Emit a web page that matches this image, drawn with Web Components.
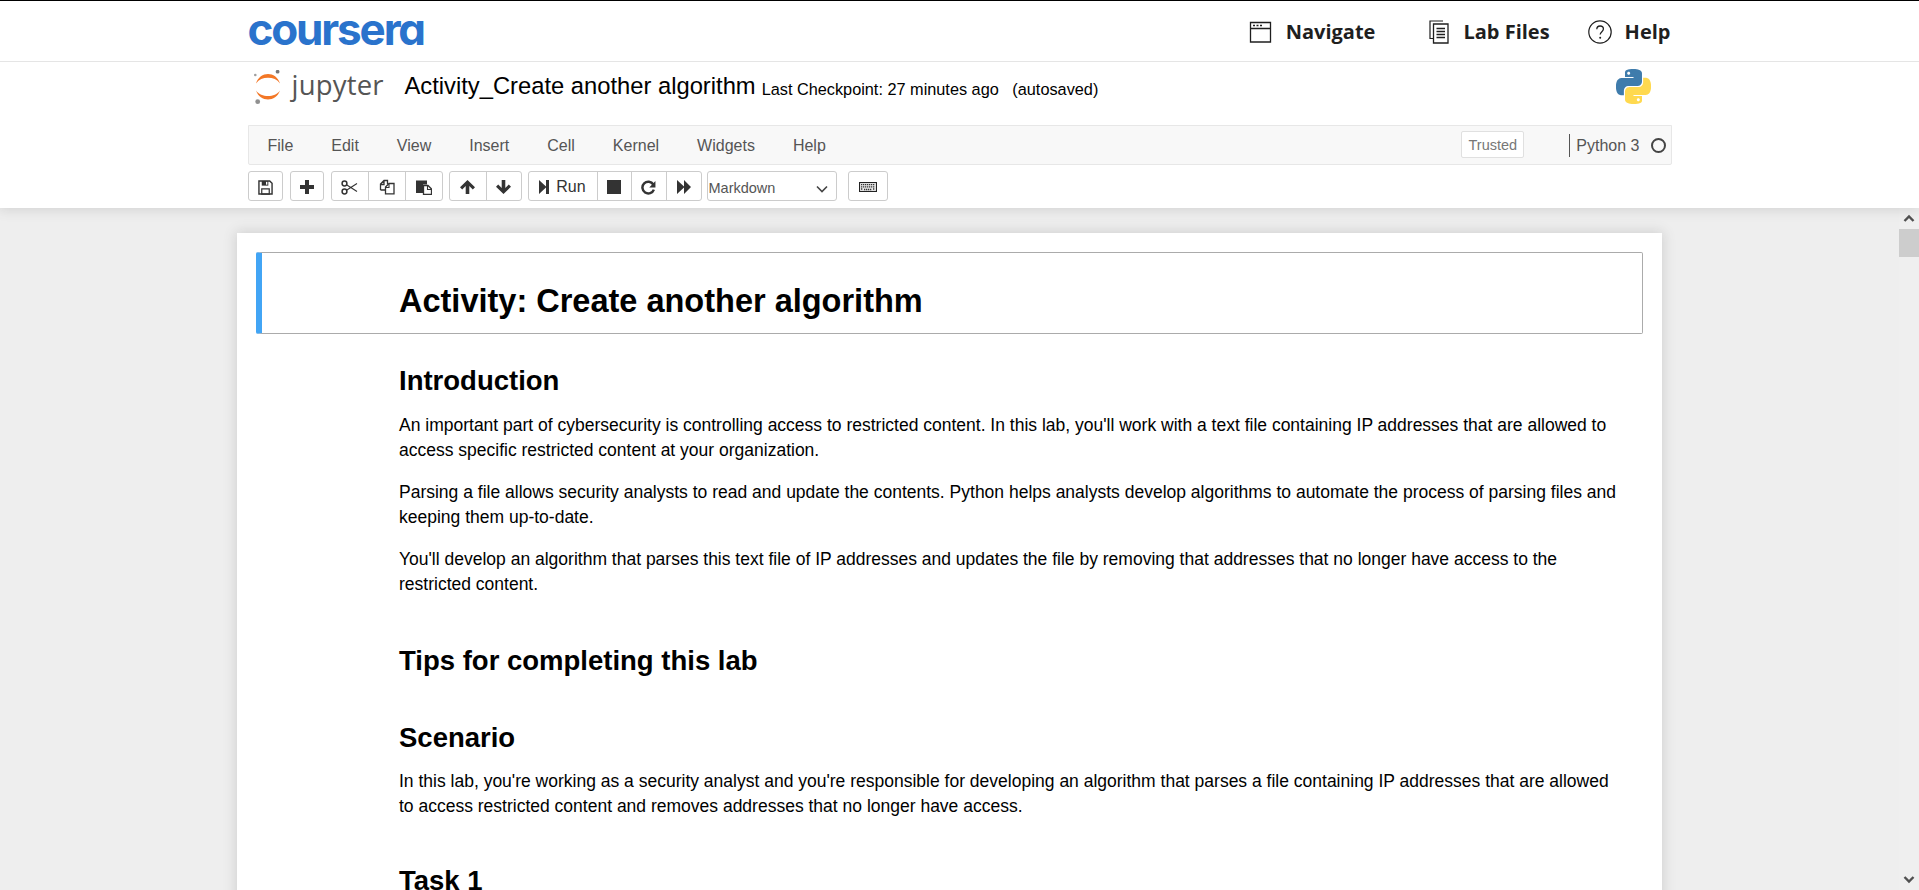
<!DOCTYPE html>
<html lang="en"><head><meta charset="utf-8"><title>Activity_Create another algorithm</title>
<style>
html,body{margin:0;height:100%;overflow:hidden;background:#eee;font-family:"Liberation Sans",Arial,sans-serif}
nb-app{height:100vh}
</style></head><body>
<nb-app>
  <coursera-bar slot="top"></coursera-bar>
  <nb-header slot="top"></nb-header>
  <nb-menubar slot="top"></nb-menubar>
  <nb-toolbar slot="top"></nb-toolbar>
  <notebook-page>
    <md-cell selected><h1>Activity: Create another algorithm</h1></md-cell>
    <md-cell>
      <h2>Introduction</h2>
      <p>An important part of cybersecurity is controlling access to restricted content. In this lab, you'll work with a text file containing IP addresses that are allowed to access specific restricted content at your organization.</p>
      <p>Parsing a file allows security analysts to read and update the contents. Python helps analysts develop algorithms to automate the process of parsing files and keeping them up-to-date.</p>
      <p>You'll develop an algorithm that parses this text file of IP addresses and updates the file by removing that addresses that no longer have access to the restricted content.</p>
      <h2 class="tips">Tips for completing this lab</h2>
      <h2 class="scen">Scenario</h2>
      <p>In this lab, you're working as a security analyst and you're responsible for developing an algorithm that parses a file containing IP addresses that are allowed to access restricted content and removes addresses that no longer have access.</p>
      <h2 class="task">Task 1</h2>
    </md-cell>
  </notebook-page>
</nb-app>
<script>
function def(name, html){
  const t=document.createElement('template');t.innerHTML=html;
  customElements.define(name,class extends HTMLElement{
    constructor(){super();this.attachShadow({mode:'open'}).appendChild(t.content.cloneNode(true))}
  });
}
def('nb-app',`<style>
:host{display:flex;flex-direction:column;overflow:hidden}
.top{display:block;background:#fff;box-shadow:0 0 12px 1px rgba(87,87,87,.2);position:relative;z-index:2;height:208px;flex:none}
.body{flex:1;min-height:0;display:flex;overflow:hidden}
.scroll{flex:1;min-width:0;overflow:hidden;padding-top:25px;box-sizing:border-box}
.bar{width:20px;flex:none;background:#efefef;display:flex;flex-direction:column;align-items:center;justify-content:space-between}
.thumb{width:20px;height:28px;background:#cdcdcd}
.col{display:flex;flex-direction:column}
</style>
<div class="top"><slot name="top"></slot></div>
<div class="body"><div class="scroll"><slot></slot></div>
<div class="bar"><div class="col"><svg width="20" height="21" viewBox="0 0 20 21" style="display:block"><path d="M5.500 13 10 8.500 14.500 13" fill="none" stroke="#505050" stroke-width="2.400"/></svg><div class="thumb"></div></div>
<svg width="20" height="20" viewBox="0 0 20 20" style="display:block"><path d="M5.500 7 10 11.500 14.500 7" fill="none" stroke="#505050" stroke-width="2.400"/></svg></div></div>`);

def('coursera-bar',`<style>
:host{display:block;border-top:1px solid #000;border-bottom:1px solid #e5e5e5;height:60px;box-sizing:content-box}
.w{width:1424px;margin:0 auto;height:60px;display:flex;align-items:center;justify-content:space-between}
.logo{font:700 44px/1 Inter,"Liberation Sans",sans-serif;font-feature-settings:"cv11";color:#2a73cc;letter-spacing:-2.150px;margin-top:-4px}
.nav{display:flex;align-items:center;margin-right:1px;font:700 20px/1 "Open Sans",sans-serif;color:#1f1f1f;margin-top:2px}
.nav span{display:block}
svg{display:block;flex:none}
</style>
<div class="w"><div class="logo">coursera</div>
<div class="nav">
<svg width="23" height="23" viewBox="0 0 23 23" style="margin-right:14px"><path d="M1.500 1.500h20v19.500h-20zM1.500 7.500h20" fill="none" stroke="#1f1f1f" stroke-width="1.300"/><path d="M4 3.700h2v1.600h-2zM7.500 3.700h2v1.600h-2zM11 3.700h2v1.600h-2z" fill="#1f1f1f"/></svg>
<span>Navigate</span>
<svg width="20" height="24" viewBox="0 0 20 24" style="margin:0 14px 0 54px"><path d="M14 1H1v17.500h3" fill="none" stroke="#1f1f1f" stroke-width="1.200"/><path d="M4.500 4h14.500v19H4.500z" fill="#fff" stroke="#1f1f1f" stroke-width="1.300"/><path d="M7.500 8.500h8.500M7.500 11.500h8.500M7.500 14.500h8.500M7.500 17.500h8.500" stroke="#1f1f1f" stroke-width="1.300"/></svg>
<span>Lab Files</span>
<svg width="24" height="24" viewBox="0 0 24 24" style="margin:0 13px 0 38px"><circle cx="12" cy="12" r="11.200" fill="none" stroke="#1f1f1f" stroke-width="1.200"/><path d="M8.800 9.300c0-2 1.400-3.300 3.300-3.300s3.300 1.200 3.300 3c0 2.700-3.200 2.600-3.200 5.600" fill="none" stroke="#1f1f1f" stroke-width="1.300"/><circle cx="12.200" cy="17.700" r="1" fill="#1f1f1f"/></svg>
<span>Help</span>
</div></div>`);

def('nb-header',`<style>
:host{display:block;height:63px}
.w{width:1424px;margin:0 auto;height:63px;display:flex}
.logo{display:block;margin:8px 0 0 6px;flex:none}
.jp{font:400 27.500px/1 "Open Sans",sans-serif;color:#555;letter-spacing:.2px;margin:9px 0 0 10px;width:113px;flex:none}
.name{font:23.750px/1 "Liberation Sans",Arial,sans-serif;color:#000;margin:12px 0 0 0;flex:none}
.cp{font:16.300px/1 "Liberation Sans",Arial,sans-serif;color:#000;margin:18.500px 0 0 6px;white-space:pre;flex:none}
.py{margin:7px 21px 0 auto;display:block;flex:none}
</style>
<div class="w">
<svg class="logo" width="28" height="35" viewBox="254 70 28 35"><path d="M256 83.500C258 77 263 74 268 74s10 3 12 9.500C277 79.500 273 77.800 268 77.800s-9 1.700-12 5.700z" fill="#f37726"/><path d="M256 90.500C258 96.500 263 99.500 268 99.500s10-3 12-9C277 94.500 273 96 268 96s-9-1.500-12-5.500z" fill="#f37726"/><circle cx="277.600" cy="71.700" r="1.900" fill="#767677"/><circle cx="255.300" cy="75" r="1.300" fill="#9e9e9e"/><circle cx="257.700" cy="101.700" r="2.400" fill="#909090"/></svg>
<div class="jp">jupyter</div>
<div class="name">Activity_Create another algorithm</div>
<div class="cp">Last Checkpoint: 27 minutes ago   (autosaved)</div>
<svg class="py" width="35" height="35" viewBox="0 0 24 24"><path fill="#3f7cac" d="M14.250.18l.9.2.73.26.59.3.45.32.34.34.25.34.16.33.1.3.04.26.02.2-.01.13V8.500l-.05.63-.13.55-.21.46-.26.38-.3.31-.33.25-.35.19-.35.14-.33.1-.3.07-.26.04-.21.02H8.770l-.69.05-.59.14-.5.22-.41.27-.33.32-.27.35-.2.36-.15.37-.1.35-.07.32-.04.27-.02.21v3.060H3.170l-.21-.03-.28-.07-.32-.12-.35-.18-.36-.26-.36-.36-.35-.46-.32-.59-.28-.73-.21-.88-.14-1.050-.05-1.230.06-1.220.16-1.040.24-.87.32-.71.36-.57.4-.44.42-.33.42-.24.4-.16.36-.1.32-.05.24-.01h.16l.06.01h8.160v-.83H6.180l-.01-2.750-.02-.37.05-.34.11-.31.17-.28.25-.26.31-.23.38-.2.44-.18.51-.15.58-.12.64-.1.71-.06.77-.04.84-.02 1.270.05zm-6.300 1.980l-.23.33-.08.41.08.41.23.34.33.22.41.09.41-.09.33-.22.23-.34.08-.41-.08-.41-.23-.33-.33-.22-.41-.09-.41.09z"/><path fill="#ffd94f" d="M21.040 6.110l.28.06.32.12.35.18.36.27.36.35.35.47.32.59.28.73.21.88.14 1.040.05 1.230-.06 1.230-.16 1.040-.24.86-.32.71-.36.57-.4.45-.42.33-.42.24-.4.16-.36.09-.32.05-.24.02-.16-.01h-8.220v.82h5.840l.01 2.760.02.36-.05.34-.11.31-.17.29-.25.25-.31.24-.38.2-.44.17-.51.15-.58.13-.64.09-.71.07-.77.04-.84.01-1.270-.04-1.070-.14-.9-.2-.73-.25-.59-.3-.45-.33-.34-.34-.25-.34-.16-.33-.1-.3-.04-.25-.02-.2.01-.13v-5.340l.05-.64.13-.54.21-.46.26-.38.3-.32.33-.24.35-.2.35-.14.33-.1.3-.06.26-.04.21-.02.13-.01h5.840l.69-.05.59-.14.5-.21.41-.28.33-.32.27-.35.2-.36.15-.36.1-.35.07-.32.04-.28.02-.21V6.070h2.090l.14.01zm-6.470 14.250l-.23.33-.08.41.08.41.23.33.33.23.41.08.41-.08.33-.23.23-.33.08-.41-.08-.41-.23-.33-.33-.23-.41-.08-.41.08z"/></svg>
</div>`);

def('nb-menubar',`<style>
:host{display:block}
.w{width:1424px;height:40px;box-sizing:border-box;margin:0 auto;background:#f8f8f8;border:1px solid #e7e7e7;border-radius:0 0 2px 2px;display:flex;align-items:center;font:16px/1 "Liberation Sans",Arial,sans-serif;color:#555}
.m{padding:2px 19px 0}
.r{margin-left:auto;display:flex;align-items:center}
.tr{font-size:14.500px;color:#777;background:#fff;border:1px solid #e0e0e0;border-radius:2px;height:27px;line-height:26px;box-sizing:border-box;width:63px;text-align:center;margin-right:45px;margin-top:-1px}
.k{border-left:1px solid #555;height:23px;line-height:23px;padding-left:6px}
.o{width:15px;height:15px;box-sizing:border-box;border:2.800px solid #444;border-radius:50%;margin:0 5px 0 11px}
</style>
<div class="w">
<span class="m">File</span><span class="m">Edit</span><span class="m">View</span><span class="m">Insert</span><span class="m">Cell</span><span class="m">Kernel</span><span class="m">Widgets</span><span class="m">Help</span>
<div class="r"><span class="tr">Trusted</span><span class="k">Python 3</span><span class="o"></span></div>
</div>`);

def('tool-group',`<style>
:host{display:flex;height:30px;border:1px solid #ccc;border-radius:3px;box-sizing:border-box;background:#fff;flex:none}
::slotted(tool-btn:not(:first-child)){border-left:1px solid #ccc}
</style><slot></slot>`);
def('tool-btn',`<style>
:host{display:flex;align-items:center;justify-content:center;box-sizing:border-box;height:28px;padding-top:2px;color:#333;font:16px/1 "Liberation Sans",Arial,sans-serif;gap:7px}
::slotted(svg){display:block}
</style><slot></slot>`);

def('nb-toolbar',`<style>
:host{display:block;padding-top:6px}
.w{width:1424px;margin:0 auto;display:flex;align-items:center}
.sel{width:130px;height:30px;box-sizing:border-box;border:1px solid #ccc;border-radius:3px;background:#fff;display:flex;align-items:center;justify-content:space-between;font:14.500px/1 "Liberation Sans",Arial,sans-serif;color:#555;padding:5px 8px 0 1px;margin:0 11px 0 5px;flex:none}
</style>
<div class="w">
<tool-group style="width:35px;margin-right:7px"><tool-btn style="width:33px"><svg width="15" height="15" viewBox="0 0 16 16"><path d="M1 1h11.500L15 3.500V15H1z" fill="none" stroke="#333" stroke-width="1.500"/><path d="M4 1h7v5H4z" fill="#333"/><path d="M8.500 2h1.500v3H8.500z" fill="#fff"/><path d="M4 9.500h8V15H4z" fill="none" stroke="#333" stroke-width="1.300"/></svg></tool-btn></tool-group>
<tool-group style="width:34px;margin-right:7px"><tool-btn style="width:32px"><svg width="14" height="14" viewBox="0 0 14 14"><path d="M5 0h4v5h5v4H9v5H5V9H0V5h5z" fill="#333"/></svg></tool-btn></tool-group>
<tool-group style="width:112px;margin-right:6px"><tool-btn style="width:37px"><svg width="17" height="15" viewBox="0 0 17 15"><circle cx="3.500" cy="3.500" r="2.400" fill="none" stroke="#333" stroke-width="1.500"/><circle cx="3.500" cy="11.500" r="2.400" fill="none" stroke="#333" stroke-width="1.500"/><path d="M5.500 4.800 16 11.500M5.500 10.200 16 3.500" stroke="#333" stroke-width="1.100" fill="none"/></svg></tool-btn><tool-btn style="width:37px"><svg width="16" height="16" viewBox="0 0 16 16"><path d="M1.500 11V5L5 1.500h3.500v3.500M1.500 5.500H5V1.500M1.500 11H6" fill="none" stroke="#333" stroke-width="1.300"/><path d="M6.500 14.800V8L10 4.500h5v10.300z" fill="#fff" stroke="#333" stroke-width="1.300"/><path d="M6.500 8.500H10V4.500" fill="none" stroke="#333" stroke-width="1.100"/></svg></tool-btn><tool-btn style="width:37px"><svg width="16" height="16" viewBox="0 0 16 16"><path d="M0 1.500h11v4H7v8.500H0z" fill="#333"/><path d="M7.500 6.500h4.500l3.500 3.500v5.500h-8z" fill="#fff" stroke="#333" stroke-width="1.300"/><path d="M11.500 6.500v4h4" fill="none" stroke="#333" stroke-width="1.100"/></svg></tool-btn></tool-group>
<tool-group style="width:73px;margin-right:6px"><tool-btn style="width:36px"><svg width="15" height="14" viewBox="0 0 15 14"><path d="M7.500 0 15 7.300 12.800 9.500 9.300 6v8H5.700V6L2.200 9.500 0 7.300z" fill="#333"/></svg></tool-btn><tool-btn style="width:35px"><svg width="15" height="14" viewBox="0 0 15 14"><path d="M7.500 14 15 6.700 12.800 4.500 9.300 8V0H5.700V8L2.200 4.500 0 6.700z" fill="#333"/></svg></tool-btn></tool-group>
<tool-group style="width:174px"><tool-btn style="width:68px"><svg width="10" height="14" viewBox="0 0 10 14"><path d="M0 0 7 6.500V0h3v14H7V7.500L0 14z" fill="#333"/></svg><span>Run</span></tool-btn><tool-btn style="width:34px"><svg width="14" height="14" viewBox="0 0 14 14"><rect width="14" height="14" fill="#333"/></svg></tool-btn><tool-btn style="width:35px"><svg width="15" height="15" viewBox="0 0 14 14"><path d="M11.500 4.200A5.500 5.500 0 1 0 12 9" fill="none" stroke="#333" stroke-width="2.300"/><path d="M13.500 1v6H7.700z" fill="#333"/></svg></tool-btn><tool-btn style="width:35px"><svg width="14" height="14" viewBox="0 0 14 14"><path d="M0 0 7 6.500V0l7 7-7 7V7.500L0 14z" fill="#333"/></svg></tool-btn></tool-group>
<div class="sel"><span>Markdown</span><svg width="12" height="8" viewBox="0 0 12 8"><path d="M1 1.500 6 6.500 11 1.500" fill="none" stroke="#444" stroke-width="1.600"/></svg></div>
<tool-group style="width:40px"><tool-btn style="width:38px"><svg width="18" height="10" viewBox="0 0 18 10"><rect x=".5" y=".5" width="17" height="9" fill="#e8e8e8" stroke="#222" stroke-width="1.100"/><path d="M2 2.600h14M2 4.800h14M2 7h2M5 7.500h8M14 7h2" stroke="#333" stroke-width="1.300" stroke-dasharray="1.300 .7"/></svg></tool-btn></tool-group>
</div>`);

def('notebook-page',`<style>
:host{display:block;width:1425px;margin:0 auto;background:#fff;box-shadow:0 0 12px 1px rgba(87,87,87,.2);padding:19px 19px 40px;box-sizing:border-box;height:900px}
</style><slot></slot>`);

def('md-cell',`<style>
:host{display:block;box-sizing:border-box;padding:0 16px 0 137px;color:#000;font:17.500px/25px "Liberation Sans",Arial,sans-serif;border:1px solid transparent;border-left:6px solid transparent}
:host([selected]){border:1px solid #ababab;border-left:6px solid #42a5f5;border-radius:2px;height:82px;display:flex;align-items:center;margin-bottom:31px}
::slotted(h1){font:700 32.500px/1.100 "Liberation Sans",Arial,sans-serif;margin:0;padding-top:18px}
::slotted(h2){font:700 27.500px/1.100 "Liberation Sans",Arial,sans-serif;margin:0 0 16.500px}
::slotted(h2.tips){margin-top:49.500px}
::slotted(h2.scen){margin-top:46px}
::slotted(h2.task){margin-top:47px}
::slotted(p){margin:0 0 17px}
</style><slot></slot>`);
</script>
</body></html>
